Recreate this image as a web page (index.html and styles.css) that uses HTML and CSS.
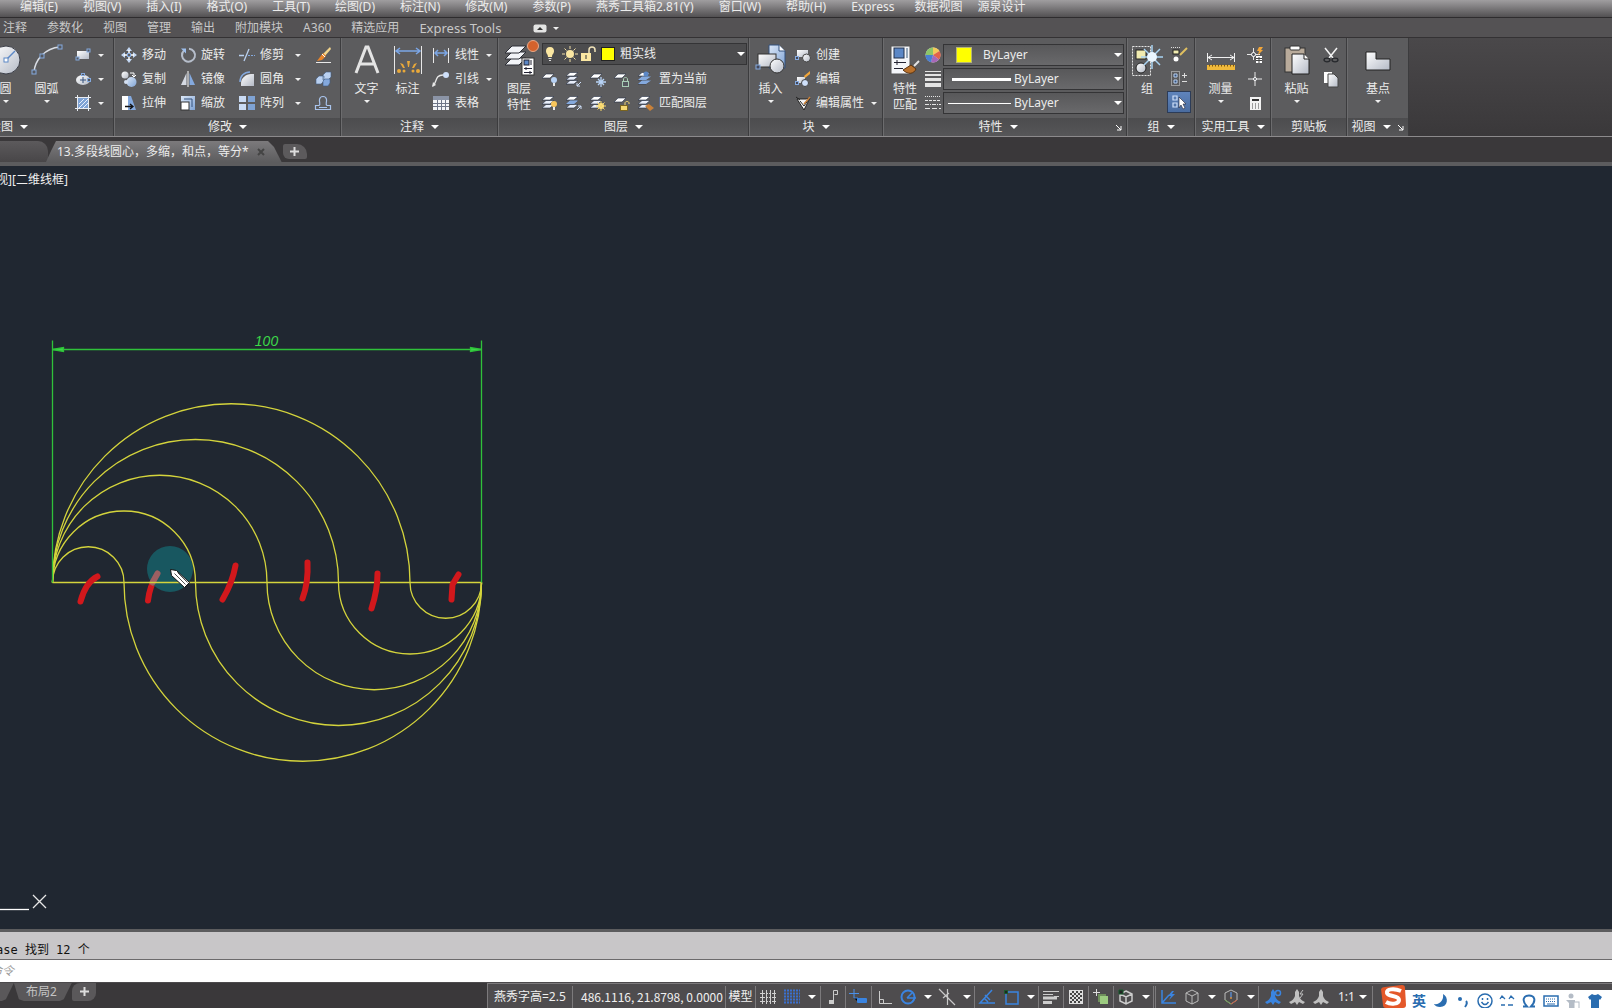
FILE: index.html
```
<!DOCTYPE html>
<html lang="zh-CN">
<head>
    <meta charset="UTF-8">
    <meta name="viewport" content="width=device-width, initial-scale=1.0">
    <title>CAD</title>
    <link rel="stylesheet" href="styles.css">
</head>
<body>
    <svg class="defs" width="0" height="0">
        <defs>
            <linearGradient id="silver" x1="0" y1="0" x2="1" y2="1">
                <stop offset="0" stop-color="#ffffff"/>
                <stop offset="1" stop-color="#b4bac6"/>
            </linearGradient>
            <linearGradient id="sky" x1="0" y1="0" x2="1" y2="1">
                <stop offset="0" stop-color="#dce8f8"/>
                <stop offset="1" stop-color="#7fa3d4"/>
            </linearGradient>
        </defs>
        <symbol id="layers" viewBox="0 0 16 16">
            <path d="M4 9.500h8L8 13H0z" fill="#e8eefa" stroke="#263044" stroke-width=".6"/>
            <path d="M4 5.500h8L8 9H0z" fill="#e8eefa" stroke="#263044" stroke-width=".6"/>
            <path d="M4 1.500h8L8 5H0z" fill="#fff" stroke="#263044" stroke-width=".6"/>
        </symbol>
        <symbol id="layer" viewBox="0 0 16 16">
            <path d="M4 3h8L8 7H0z" fill="#fff" stroke="#263044" stroke-width=".6"/>
        </symbol>
        <symbol id="person" viewBox="0 0 16 16">
            <path d="M8 0l2 3v4c1 3 3 5 6 6l-2 2-4-2-2 3-2-3-4 2-2-2c3-1 5-3 6-6V3z"/>
        </symbol>
    </svg>

    <nav class="menubar">
        <a href="#">编辑(E)</a>
        <a href="#">视图(V)</a>
        <a href="#">插入(I)</a>
        <a href="#">格式(O)</a>
        <a href="#">工具(T)</a>
        <a href="#">绘图(D)</a>
        <a href="#">标注(N)</a>
        <a href="#">修改(M)</a>
        <a href="#">参数(P)</a>
        <a href="#">燕秀工具箱2.81(Y)</a>
        <a href="#">窗口(W)</a>
        <a href="#">帮助(H)</a>
        <a href="#">Express</a>
        <a href="#" class="tight">数据视图</a>
        <a href="#" class="tighter">源泉设计</a>
    </nav>

    <nav class="ribbon-tabs">
        <a href="#">注释</a>
        <a href="#">参数化</a>
        <a href="#">视图</a>
        <a href="#">管理</a>
        <a href="#">输出</a>
        <a href="#">附加模块</a>
        <a href="#">A360</a>
        <a href="#">精选应用</a>
        <a href="#" class="latin">Express Tools</a>
        <button class="minimize" aria-label="最小化功能区">
            <svg width="14" height="9" viewBox="0 0 14 9"><rect x=".5" y=".5" width="13" height="8" rx="2" fill="#e4e4e4"/><path d="M4 6h6L7 3z" fill="#333"/></svg>
            <span class="caret"></span>
        </button>
    </nav>

    <main class="ribbon">
        <section class="panel panel-draw">
            <div class="panel-body">
                <button class="big">
                    <svg width="32" height="32" viewBox="0 0 32 32"><circle cx="16" cy="16" r="14" fill="url(#silver)" stroke="#3c3f48"/><path d="M16 16l9-9" stroke="#5b87c6" stroke-width="1.500"/><rect x="14" y="14" width="4" height="4" fill="#fff" stroke="#5b87c6"/></svg>
                    <span>圆</span><span class="caret"></span>
                </button>
                <button class="big">
                    <svg width="32" height="32" viewBox="0 0 32 32"><path d="M3 28C4 16 14 4 29 3" fill="none" stroke="#d9dde4" stroke-width="1.500"/><g fill="#55585f" stroke="#84a9de"><rect x="1" y="26" width="4" height="4"/><rect x="9" y="10" width="4" height="4"/><rect x="27" y="1" width="4" height="4"/></g></svg>
                    <span>圆弧</span><span class="caret"></span>
                </button>
                <div class="tools">
                    <button class="tool" aria-label="矩形"><svg width="16" height="16" viewBox="0 0 16 16"><rect x="2" y="4" width="12" height="8" fill="url(#silver)"/><g fill="#55585f" stroke="#84a9de"><rect x="1" y="10" width="3" height="3"/><rect x="12" y="2" width="3" height="3"/></g></svg><span class="caret"></span></button>
                    <button class="tool" aria-label="椭圆"><svg width="16" height="16" viewBox="0 0 16 16"><ellipse cx="8" cy="9" rx="7" ry="5" fill="url(#silver)"/><path d="M8 6v6M5 9h6" stroke="#33507c"/><g fill="#55585f" stroke="#84a9de"><rect x="6.500" y="2.500" width="3" height="2"/><rect x="12.500" y="7.500" width="3" height="3"/></g></svg><span class="caret"></span></button>
                    <button class="tool" aria-label="图案填充"><svg width="16" height="16" viewBox="0 0 16 16"><rect x="3" y="3" width="10" height="10" fill="#7fa3d4"/><path d="M4 9l5-5M4 13l9-9M8 13l5-5" stroke="#e8f0fc"/><path d="M0 2.500h16M0 13.500h16M2.500 0v16M13.500 0v16" stroke="#e8ecf2"/></svg><span class="caret"></span></button>
                </div>
            </div>
            <h2 class="panel-title">绘图<span class="caret-big"></span></h2>
        </section>

        <section class="panel panel-modify">
            <div class="panel-body">
                <div class="tools-grid">
                    <button class="tool"><svg width="16" height="16" viewBox="0 0 16 16"><path d="M8 0l3 4H5zM8 16l3-4H5zM0 8l4-3v6zM16 8l-4-3v6z" fill="#c4d8f4"/><path d="M8 3v3M8 10v3M3 8h3M10 8h3" stroke="#fff" stroke-width="1.500"/><rect x="6.500" y="6.500" width="3" height="3" fill="none" stroke="#84a9de"/></svg>移动</button>
                    <button class="tool"><svg width="16" height="16" viewBox="0 0 16 16"><path d="M4 3.500a6.500 6.500 0 1 0 5-1.800" fill="none" stroke="#b6becb" stroke-width="2"/><path d="M1 1.500h5v5z" fill="#9ec0ee"/></svg>旋转</button>
                    <button class="tool"><svg width="16" height="16" viewBox="0 0 16 16"><path d="M0 8.500h5M10 2L5 14" stroke="#b9d0f0" stroke-width="1.300"/><path d="M9 8.500h7" stroke="#84a9de" stroke-dasharray="2 1"/></svg>修剪<span class="caret"></span></button>
                    <button class="tool" aria-label="删除"><svg width="16" height="16" viewBox="0 0 16 16"><path d="M1 15.500h15" stroke="#e8e8e8"/><path d="M15 0L8 7l2 2 6-7z" fill="#f2d48c"/><path d="M8 6l3 3-4 4-5 1z" fill="#e8842a"/><path d="M7 7l3 3" stroke="#fff"/></svg></button>

                    <button class="tool"><svg width="16" height="16" viewBox="0 0 16 16"><circle cx="4" cy="4" r="3.500" fill="url(#silver)"/><circle cx="10.500" cy="11" r="5" fill="url(#sky)"/><circle cx="5" cy="11" r="2" fill="#d4e0f2"/><path d="M9 2h4v4M11 4l2 2 2-2" fill="none" stroke="#fff"/></svg>复制</button>
                    <button class="tool"><svg width="16" height="16" viewBox="0 0 16 16"><path d="M6.500 2v12H1z" fill="#d5dae3"/><path d="M9.500 2v12H15z" fill="#84a9de"/><path d="M8 0v16" stroke="#fff"/></svg>镜像</button>
                    <button class="tool"><svg width="16" height="16" viewBox="0 0 16 16"><path d="M2 15V12C2 7 7 3 12 3h3v12z" fill="url(#silver)"/><path d="M1 11C1 5 5 1 11 1" fill="none" stroke="#84a9de" stroke-width="1.500"/></svg>圆角<span class="caret"></span></button>
                    <button class="tool" aria-label="分解"><svg width="16" height="16" viewBox="0 0 16 16"><path d="M1 8l3-3h5v5l-3 3H1zM8 4l3-3h5v5l-3 3H8z" fill="#b9d0f0" stroke="#405a80" stroke-width=".6"/><path d="M8 10l2-2h5v4l-2 3H8z" fill="#84a9de" stroke="#405a80" stroke-width=".6"/></svg></button>

                    <button class="tool"><svg width="16" height="16" viewBox="0 0 16 16"><path d="M1 1h6v14H1z" fill="#fff"/><path d="M7 1h3l5 14H7z" fill="#84a9de"/><path d="M4 11.500h7M9 9l3 2.500L9 14" fill="none" stroke="#111" stroke-width="1.300"/></svg>拉伸</button>
                    <button class="tool"><svg width="16" height="16" viewBox="0 0 16 16"><rect x="1" y="1" width="14" height="14" fill="url(#sky)"/><rect x="1" y="7" width="8" height="8" fill="#fff" stroke="#333"/><path d="M4 4h8v8" fill="none" stroke="#33507c" /></svg>缩放</button>
                    <button class="tool"><svg width="16" height="16" viewBox="0 0 16 16"><path d="M0 1h7v6H0zM0 9h7v6H0z" fill="#c9dbf4"/><path d="M9 1h7v6H9zM9 9h7v6H9z" fill="#7fa3d4"/></svg>阵列<span class="caret"></span></button>
                    <button class="tool" aria-label="偏移"><svg width="16" height="16" viewBox="0 0 16 16"><path d="M0 14.500h15.500v-4H12c-2-1 0-3-.5-6-.5-4-6.500-4-7 0-.5 3 1.500 5-.5 6H.5v4M4 12.500h8" fill="none" stroke="#a9c4ec" stroke-width="1.200"/></svg></button>
                </div>
            </div>
            <h2 class="panel-title">修改<span class="caret-big"></span></h2>
        </section>

        <section class="panel panel-annotate">
            <div class="panel-body">
                <button class="big">
                    <svg width="32" height="32" viewBox="0 0 32 32"><path d="M5 29L15 3h2l10 26M9 20h14" fill="none" stroke="#e4e4e4" stroke-width="3"/></svg>
                    <span>文字</span><span class="caret"></span>
                </button>
                <button class="big">
                    <svg width="32" height="32" viewBox="0 0 32 32"><path d="M2.500 2v28M29.500 2v28" stroke="#e8e8e8"/><path d="M4 7h24M8 4L4 7l4 3M24 4l4 3-4 3" fill="none" stroke="#7ba6e6" stroke-width="1.500"/><g fill="#e8a83a"><path d="M15 17h3l-1 6h-1zM8 19l3 1 2 4-2 0zM25 19l-3 1-2 4 2 0z"/><circle cx="7" cy="27" r="2"/><circle cx="12" cy="27" r="1.500"/><circle cx="21" cy="27" r="1.500"/><circle cx="26" cy="27" r="2"/></g></svg>
                    <span>标注</span>
                </button>
                <div class="tools">
                    <button class="tool"><svg width="18" height="16" viewBox="0 0 18 16"><path d="M1.500 1v15M16.500 1v15" stroke="#e8e8e8"/><path d="M3 6h12M6 3L3 6l3 3M12 3l3 3-3 3" fill="none" stroke="#7ba6e6" stroke-width="1.500"/></svg>线性<span class="caret"></span></button>
                    <button class="tool"><svg width="18" height="16" viewBox="0 0 18 16"><path d="M1 15C5 11 3 4 11 4" fill="none" stroke="#e8e8e8" stroke-width="1.300"/><path d="M0 16l1-5 3 3z" fill="#e8e8e8"/><circle cx="14" cy="4" r="3" fill="#cfe0fa"/></svg>引线<span class="caret"></span></button>
                    <button class="tool"><svg width="18" height="16" viewBox="0 0 18 16"><rect x="1" y="1" width="16" height="14" fill="#f2f4f8"/><path d="M1 1h16v4H1z" fill="#8b94a6"/><path d="M1 8.500h16M1 11.500h16M5.500 5v10M9.500 5v10M13.500 5v10" stroke="#6d7588"/></svg>表格</button>
                </div>
            </div>
            <h2 class="panel-title">注释<span class="caret-big"></span></h2>
        </section>

        <section class="panel panel-layers">
            <div class="panel-body">
                <button class="big">
                    <svg width="32" height="32" viewBox="0 0 32 32"><g fill="#f2f4f8" stroke="#2c2f36"><path d="M9 14h14l-7 7H2z"/><path d="M9 8h14l-7 7H2z"/><path d="M9 2h14l-7 7H2z"/></g><rect x="19" y="14" width="12" height="17" fill="#fff" stroke="#333"/><rect x="21" y="16" width="5" height="5" fill="#5b87c6" stroke="#223"/><path d="M28 16v5M21 24.500h8M21 28.500h8M23 23v3M27 27v3" stroke="#223"/></svg>
                    <span>图层</span><span>特性</span>
                </button>
                <div class="layer-tools">
                    <div class="combo">
                        <svg width="64" height="20" viewBox="0 0 64 20"><path d="M7 3c-3 0-4 2-4 4 0 3 2 3 2 6h4c0-3 2-3 2-6 0-2-1-4-4-4z" fill="#fbe7a2"/><path d="M5.500 14.500h3M6 16.500h2" stroke="#ddd"/><circle cx="27" cy="10" r="4" fill="#fbe7a2"/><path d="M27 2v3M27 15v3M19 10h3M32 10h3M21.500 4.500l2 2M30.500 13.500l2 2M32.500 4.500l-2 2M23.500 13.500l-2 2" stroke="#f2dfa4"/><rect x="38" y="9" width="10" height="8" fill="#fbe7a2"/><path d="M46 9V6c0-4 6-4 6 0v2" fill="none" stroke="#f0e2b8" stroke-width="1.500"/><path d="M43 11v4" stroke="#333"/></svg>
                        <span class="swatch small"></span>
                        <select aria-label="图层"><option>粗实线</option></select>
                        <span class="caret-big"></span>
                    </div>
                    <div class="layer-row">
                        <button class="tool" aria-label="关"><svg width="16" height="16"><use href="#layer"/><circle cx="12" cy="9" r="3" fill="#b7d2f5"/><path d="M12 12v3" stroke="#e8e8e8" stroke-width="2"/></svg></button>
                        <button class="tool" aria-label="隔离"><svg width="16" height="16"><use href="#layers"/><path d="M15 11l-4 4M11 12v3h3" fill="none" stroke="#cfe0fa"/></svg></button>
                        <button class="tool" aria-label="冻结"><svg width="16" height="16"><use href="#layer"/><path d="M11 6v10M6 11h10M8 8l6 6M14 8l-6 6" stroke="#b7d2f5" stroke-width="1.300"/></svg></button>
                        <button class="tool" aria-label="锁定"><svg width="16" height="16"><use href="#layer"/><path d="M9.500 11V8c0-2 4-2 4 0v3" fill="none" stroke="#a9cdb5"/><rect x="8.500" y="10.500" width="6" height="5" fill="#55585f" stroke="#a9cdb5"/></svg></button>
                        <button class="tool"><svg width="16" height="16"><use href="#layers"/><path d="M4 5.500h9L8 9H0z" fill="#84a9de"/><path d="M4 9.500h9L8 13H0z" fill="#84a9de"/><circle cx="8" cy="3" r="2.500" fill="#5b87c6"/></svg>置为当前</button>
                    </div>
                    <div class="layer-row">
                        <button class="tool" aria-label="打开所有图层"><svg width="16" height="16"><use href="#layers"/><circle cx="12" cy="9" r="3" fill="#f8c65c"/><path d="M12 12v3" stroke="#e8e8e8" stroke-width="2"/></svg></button>
                        <button class="tool" aria-label="取消隔离"><svg width="16" height="16"><use href="#layers"/><path d="M4 5.500h8L8 9H0z" fill="#84a9de"/><path d="M11 15l4-4M12 11h3v3" fill="none" stroke="#cfe0fa"/></svg></button>
                        <button class="tool" aria-label="解冻所有图层"><svg width="16" height="16"><use href="#layers"/><circle cx="11" cy="11" r="3" fill="#ffe68a"/><path d="M11 6v10M6 11h10M7.500 7.500l7 7M14.500 7.500l-7 7" stroke="#f6d568"/></svg></button>
                        <button class="tool" aria-label="解锁"><svg width="16" height="16"><use href="#layer"/><path d="M11 11V8c0-2 4-2 4 0v1" fill="none" stroke="#f4d772"/><rect x="6.500" y="10.500" width="7" height="5" fill="#f4d772" stroke="#7a6420"/></svg></button>
                        <button class="tool"><svg width="16" height="16"><use href="#layers"/><path d="M7 11l4-2 5 4-4 3z" fill="#c8813a"/></svg>匹配图层</button>
                    </div>
                </div>
                <span class="badge"></span>
            </div>
            <h2 class="panel-title">图层<span class="caret-big"></span></h2>
        </section>

        <section class="panel panel-block">
            <div class="panel-body">
                <button class="big">
                    <svg width="32" height="32" viewBox="0 0 32 32"><path d="M14 1h10l6 6v17H14z" fill="url(#sky)" stroke="#33507c"/><path d="M24 1v6h6" fill="#fff" stroke="#33507c"/><rect x="3" y="10" width="18" height="13" fill="url(#silver)" stroke="#333"/><circle cx="22" cy="22" r="7" fill="url(#silver)" stroke="#333"/><rect x="1" y="21" width="4" height="4" fill="#44485a" stroke="#84a9de"/></svg>
                    <span>插入</span><span class="caret"></span>
                </button>
                <div class="tools">
                    <button class="tool"><svg width="16" height="16" viewBox="0 0 16 16"><rect x="2" y="3" width="11" height="7" fill="url(#silver)"/><circle cx="11.500" cy="11" r="4" fill="url(#silver)" stroke="#444"/><rect x=".5" y="9.500" width="3" height="3" fill="#44485a" stroke="#84a9de"/></svg>创建</button>
                    <button class="tool"><svg width="16" height="16" viewBox="0 0 16 16"><rect x="2" y="6" width="8" height="6" fill="url(#silver)"/><circle cx="10" cy="12" r="3.500" fill="#cfe0fa" stroke="#444"/><rect x=".5" y="10.500" width="3" height="3" fill="#44485a" stroke="#84a9de"/><path d="M15 0l-6 5 1 2 5-4z" fill="#f2a63a"/></svg>编辑</button>
                    <button class="tool"><svg width="16" height="16" viewBox="0 0 16 16"><path d="M2 4h9l4-1-6 12z" fill="#f4f4f4" stroke="#222"/><path d="M1 2l4 3M5 6l4 5 5-7" fill="none" stroke="#222"/><path d="M15 2l-6 7" stroke="#c8813a" stroke-width="1.500"/></svg>编辑属性<span class="caret"></span></button>
                </div>
            </div>
            <h2 class="panel-title">块<span class="caret-big"></span></h2>
        </section>

        <section class="panel panel-props">
            <div class="panel-body">
                <button class="big">
                    <svg width="32" height="32" viewBox="0 0 32 32"><rect x="2" y="2" width="19" height="28" fill="#f4f6fa" stroke="#555"/><rect x="5" y="4" width="10" height="10" fill="#5b87c6" stroke="#22304a"/><path d="M18 4v10" stroke="#9ab" stroke-width="2"/><path d="M5 18.500h12M8 16v5M5 24.500h9" stroke="#223"/><path d="M30 17l-5 5" stroke="#e4e4e4" stroke-width="2"/><path d="M14 26l8-5 5 4c-2 5-8 6-13 1z" fill="#b9712c" stroke="#5a3411"/></svg>
                    <span>特性</span><span>匹配</span>
                </button>
                <div class="prop-tools">
                    <div class="prop-row">
                        <svg width="16" height="16" viewBox="0 0 16 16"><circle cx="8" cy="8" r="7.500" fill="#ddd"/><path d="M8 8V.5A7.500 7.500 0 0 1 14.500 4z" fill="#f3c95a"/><path d="M8 8l6.500-4A7.500 7.500 0 0 1 14 12.500z" fill="#e2634a"/><path d="M8 8l6 4.500A7.500 7.500 0 0 1 6 15z" fill="#a868b8"/><path d="M8 8L6 15.200A7.500 7.500 0 0 1 .5 8z" fill="#4a7fd0"/><path d="M8 8H.5A7.500 7.500 0 0 1 8 .5z" fill="#8cc46a"/></svg>
                        <div class="combo">
                            <span class="swatch"></span>
                            <select aria-label="颜色"><option>ByLayer</option></select>
                            <span class="caret-big"></span>
                        </div>
                    </div>
                    <div class="prop-row">
                        <svg width="16" height="16" viewBox="0 0 16 16"><path d="M0 .5h16" stroke="#e4e4e4"/><path d="M0 4h16" stroke="#e4e4e4" stroke-width="2"/><path d="M0 8.500h16" stroke="#e4e4e4" stroke-width="3"/><path d="M0 14h16" stroke="#e4e4e4" stroke-width="4"/></svg>
                        <div class="combo">
                            <span class="line thick"></span>
                            <select aria-label="线宽"><option>ByLayer</option></select>
                            <span class="caret-big"></span>
                        </div>
                    </div>
                    <div class="prop-row">
                        <svg width="16" height="16" viewBox="0 0 16 16" stroke="#e4e4e4"><path d="M0 1.500h16" stroke-dasharray="1 1"/><path d="M0 5.500h16" stroke-dasharray="3 1"/><path d="M0 9.500h16" stroke-dasharray="4 1 1 1"/><path d="M0 13.500h16" stroke-dasharray="5 2"/></svg>
                        <div class="combo">
                            <span class="line"></span>
                            <select aria-label="线型"><option>ByLayer</option></select>
                            <span class="caret-big"></span>
                        </div>
                    </div>
                </div>
            </div>
            <h2 class="panel-title">特性<span class="caret-big"></span><svg class="launcher" width="6" height="6" viewBox="0 0 6 6"><path d="M0 0l5 5M5 1v4H1" fill="none" stroke="#fff"/></svg></h2>
        </section>

        <section class="panel panel-group">
            <div class="panel-body">
                <button class="big">
                    <svg width="32" height="32" viewBox="0 0 32 32"><rect x="1.500" y="2.500" width="18" height="29" fill="none" stroke="#e4e4e4" stroke-dasharray="2 1"/><rect x="5" y="6" width="10" height="9" fill="#f0ebb0" stroke="#222"/><circle cx="10" cy="24" r="5" fill="url(#silver)" stroke="#222"/><path d="M21 1v24M10 13h22M13 5l16 16M29 5L13 21" stroke="#a8d4f4" stroke-width="1.500"/><circle cx="21" cy="13" r="5" fill="#eaf6ff"/></svg>
                    <span>组</span>
                </button>
                <div class="tools">
                    <button class="tool" aria-label="解除编组"><svg width="16" height="16" viewBox="0 0 16 16"><path d="M0 .5h10" stroke="#ddd" stroke-dasharray="1 1"/><rect x="2" y="3" width="6" height="4" fill="#f0ebb0" stroke="#222"/><circle cx="5" cy="12" r="2.500" fill="#fff"/><path d="M16 1L9 8" stroke="#e0c060" stroke-width="2"/></svg></button>
                    <button class="tool" aria-label="组编辑"><svg width="16" height="16" viewBox="0 0 16 16"><rect x=".5" y=".5" width="8" height="14" fill="none" stroke="#ddd" stroke-dasharray="1 1"/><path d="M3 3h3v3H3zM3 9h3v3H3z" fill="#33507c" stroke="#b9d0f0"/><path d="M11 4.500h5M13.500 2v5M11 10.500h5" stroke="#ddd"/></svg></button>
                    <button class="tool on" aria-label="启用组选择"><svg width="16" height="16" viewBox="0 0 16 16"><path d="M2 2h4v4H2zM2 9h4v4H2z" fill="none" stroke="#cfe0fa" stroke-width="1.200"/><path d="M8 3v11l2-3 2 4 2-1-2-4h3z" fill="#fff" stroke="#223"  stroke-width=".6"/></svg></button>
                </div>
            </div>
            <h2 class="panel-title">组<span class="caret-big"></span></h2>
        </section>

        <section class="panel panel-utils">
            <div class="panel-body">
                <button class="big">
                    <svg width="32" height="32" viewBox="0 0 32 32"><path d="M2.500 9v9M29.500 9v9M3 13.500h26M7 11l-4 2.500L7 16M25 11l4 2.500-4 2.500" fill="none" stroke="#f0f0f0"/><rect x="2" y="21" width="28" height="5" fill="#f0b93a"/><path d="M4 21.500h26" stroke="#7a5510" stroke-dasharray="1 2" stroke-width="2"/></svg>
                    <span>测量</span><span class="caret"></span>
                </button>
                <div class="tools">
                    <button class="tool" aria-label="快速选择"><svg width="16" height="16" viewBox="0 0 16 16"><path d="M6.500 1v12M0 7.500h13" stroke="#e8e8e8"/><circle cx="6.500" cy="7.500" r="2" fill="#55585f" stroke="#fff"/><path d="M12 0h4l-2 3h2l-5 5 1-4h-2z" fill="#f2a63a"/><path d="M9 9h6v7H9z" fill="#fff"/><path d="M9 11.500h6M9 13.500h6M12 10v6" stroke="#444"/></svg></button>
                    <button class="tool" aria-label="点样式"><svg width="16" height="16" viewBox="0 0 16 16"><path d="M8 1v14M1 8h14" stroke="#e8e8e8"/><circle cx="8" cy="8" r="1.500" fill="#55585f" stroke="#fff"/></svg></button>
                    <button class="tool" aria-label="计算器"><svg width="16" height="16" viewBox="0 0 16 16"><rect x="3" y="2" width="11" height="13" fill="#f2f2f2"/><path d="M5 5h7" stroke="#333" stroke-width="2"/><path d="M5 9h7M5 11h7M5 13h7" stroke="#444" stroke-dasharray="1 2"/></svg></button>
                </div>
            </div>
            <h2 class="panel-title">实用工具<span class="caret-big"></span></h2>
        </section>

        <section class="panel panel-clip">
            <div class="panel-body">
                <button class="big">
                    <svg width="32" height="32" viewBox="0 0 32 32"><rect x="4" y="4" width="20" height="24" fill="#b9ab9b" stroke="#333"/><rect x="9" y="2" width="10" height="4" rx="1" fill="#fff" stroke="#333"/><path d="M11 10h12l5 5v15H11z" fill="url(#silver)" stroke="#222"/><path d="M23 10v5h5" fill="#fff" stroke="#222"/></svg>
                    <span>粘贴</span><span class="caret"></span>
                </button>
                <div class="tools">
                    <button class="tool" aria-label="剪切"><svg width="16" height="16" viewBox="0 0 16 16"><path d="M2 1l8 10M14 1L6 11" stroke="#f4f4f4" stroke-width="1.500"/><g fill="none" stroke="#26282c" stroke-width="1.300"><ellipse cx="4" cy="13" rx="3" ry="1.800"/><ellipse cx="12" cy="13" rx="3" ry="1.800"/></g></svg></button>
                    <button class="tool" aria-label="复制"><svg width="16" height="16" viewBox="0 0 16 16"><path d="M1 1h8v11H1z" fill="#fff"/><path d="M5 3h6l4 4v9H5z" fill="url(#silver)" stroke="#444"/></svg></button>
                </div>
            </div>
            <h2 class="panel-title">剪贴板</h2>
        </section>

        <section class="panel panel-view">
            <div class="panel-body">
                <button class="big">
                    <svg width="32" height="32" viewBox="0 0 32 32"><path d="M4 8h10v7h14v11H4z" fill="url(#silver)" stroke="#222"/></svg>
                    <span>基点</span><span class="caret"></span>
                </button>
            </div>
            <h2 class="panel-title">视图<span class="caret-big"></span><svg class="launcher" width="6" height="6" viewBox="0 0 6 6"><path d="M0 0l5 5M5 1v4H1" fill="none" stroke="#fff"/></svg></h2>
        </section>
    </main>

    <div class="file-tabs">
        <button class="file-tab previous" aria-label="开始"></button>
        <button class="file-tab active">13.多段线圆心，多缩，和点，等分*
            <svg width="8" height="8" viewBox="0 0 8 8"><path d="M1 1l6 6M7 1L1 7" stroke="#444" stroke-width="2"/></svg>
        </button>
        <button class="file-tab add" aria-label="新图形"><svg width="9" height="9" viewBox="0 0 9 9"><path d="M4.500 0v9M0 4.500h9" stroke="#ddd" stroke-width="2"/></svg></button>
    </div>

    <div class="canvas">
        <span class="view-label">视][二维线框]</span>
        <svg class="drawing" width="100%" height="100%">
            <!-- origin is the left end of the 100 unit base line -->
            <g transform="translate(52.500 416.500)" fill="none">
                <path d="M105-9Q97 4 95.500 18" stroke="#d2181c" stroke-width="6" stroke-linecap="round"/>
                <circle cx="117.500" cy="-13.500" r="23" fill="#186068" fill-opacity=".85"/>
                <path d="M105-9l-5 9" stroke="#9c5f62" stroke-width="6" stroke-linecap="round"/>
                <g stroke="#d4d43c" stroke-width="1.300">
                    <path d="M0 0h429"/>
                    <path d="M0 0a35.750 35.750 0 0 1 71.500 0a178.750 178.750 0 0 0 357.500 0"/>
                    <path d="M0 0a71.500 71.500 0 0 1 143 0a143 143 0 0 0 286 0"/>
                    <path d="M0 0a107.250 107.250 0 0 1 214.500 0a107.250 107.250 0 0 0 214.500 0"/>
                    <path d="M0 0a143 143 0 0 1 286 0a71.500 71.500 0 0 0 143 0"/>
                    <path d="M0 0a178.750 178.750 0 0 1 357.500 0a35.750 35.750 0 0 0 71.500 0"/>
                </g>
                <g stroke="#2fc23a" stroke-width="1.300">
                    <path d="M0 0v-242M429 0v-242M0-233h429"/>
                    <path d="M0-233l11-2v4zM429-233l-11-2v4z" fill="#3cd848"/>
                </g>
                <text class="dim-text" x="214" y="-237" text-anchor="middle">100</text>
                <g stroke="#d2181c" stroke-width="6" stroke-linecap="round" stroke-linejoin="round">
                    <path d="M45-6Q33 0 28 19"/>
                    <path d="M183-17Q180 0 170 17"/>
                    <path d="M255-20Q256 0 250 16"/>
                    <path d="M325-9Q325 8 319 26"/>
                    <path d="M406-8l-6 10-1 15"/>
                </g>
                <path d="M118-13l6 1 13 12-5 5-13-12z" fill="#fff" stroke="#111"/>
                <path d="M122-9l11 11M125-10l10 10" stroke="#222" stroke-width=".8"/>
            </g>
        </svg>
        <svg class="ucs" width="48" height="16" viewBox="0 0 48 16"><path d="M0 15.500h29" stroke="#fff" stroke-width="1.300"/><path d="M33 1l13 13M46 1L33 14" stroke="#e8e8e8" stroke-width="1.300"/></svg>
    </div>

    <div class="command">
        <div class="history">ase 找到 12 个</div>
        <input type="text" aria-label="命令行" placeholder="命令">
    </div>

    <footer class="bottom">
        <div class="layout-tabs">
            <button class="layout-tab first">布局1</button>
            <button class="layout-tab">布局2</button>
            <button class="layout-tab add" aria-label="新建布局"><svg width="9" height="9" viewBox="0 0 9 9"><path d="M4.500 0v9M0 4.500h9" stroke="#ddd" stroke-width="2"/></svg></button>
        </div>
        <div class="status">
            <div class="cell text-height">燕秀字高=2.5</div>
            <div class="cell coords">486.1116, 21.8798, 0.0000</div>
            <div class="cell"><button class="model">模型</button></div>
            <div class="cell wide">
                <button class="slot" aria-label="栅格"><svg width="16" height="16" viewBox="0 0 16 16" stroke="#d0d0d0"><path d="M2.500 1v14M6.500 1v14M10.500 1v14M14.500 1v14"/><path d="M0 4.500h16M0 8.500h16M0 12.500h16" stroke-dasharray="2 1"/></svg></button>
                <button class="slot" aria-label="捕捉"><svg width="16" height="16" viewBox="0 0 16 16" stroke="#3a70d0"><path d="M0 1.500h16M0 4.500h16M0 7.500h16M0 10.500h16M0 13.500h16" stroke-width="2" stroke-dasharray="2 1"/></svg></button>
                <button class="drop" aria-label="捕捉设置"><span class="caret-big"></span></button>
            </div>
            <div class="cell"><button class="slot" aria-label="推断约束"><svg width="16" height="16" viewBox="0 0 16 16"><path d="M8.500 13V1.500h4v4h-3" fill="none" stroke="#ccc"/><rect x="4" y="11" width="5" height="4" fill="#ccc"/></svg></button></div>
            <div class="cell wide"><button class="slot" aria-label="动态输入"><svg width="18" height="16" viewBox="0 0 18 16"><path d="M5 0v9M0 4.500h10" stroke="#4a90e8"/><path d="M5 9h4v4" stroke="#3a84e0"/><rect x="8" y="9" width="10" height="5" rx="1" fill="#3a84e0"/></svg></button></div>
            <div class="cell">
                <button class="slot" aria-label="正交"><svg width="16" height="16" viewBox="0 0 16 16"><path d="M3.500 2v12.500H16M3.500 10.500h4v4" fill="none" stroke="#ccc"/></svg></button>
                <button class="slot" aria-label="极轴"><svg width="16" height="16" viewBox="0 0 16 16"><circle cx="8" cy="8" r="6.500" fill="none" stroke="#3a84e0" stroke-width="2"/><path d="M7 9h9M7 9l5-5" stroke="#3a84e0" stroke-width="1.500"/></svg></button>
                <button class="drop" aria-label="极轴设置"><span class="caret-big"></span></button>
                <button class="slot" aria-label="等轴测"><svg width="16" height="16" viewBox="0 0 16 16"><path d="M0 0l16 16M8.500 0v16M4 9l6-5" stroke="#c8c8c8" stroke-width="1.200"/></svg></button>
                <button class="drop" aria-label="等轴测设置"><span class="caret-big"></span></button>
            </div>
            <div class="cell">
                <button class="slot" aria-label="对象追踪"><svg width="16" height="16" viewBox="0 0 16 16"><path d="M13 1L1 14h15M6 6l5 5M5 9l4 4" fill="none" stroke="#3a84e0" stroke-width="1.500"/></svg></button>
                <button class="slot" aria-label="对象捕捉"><svg width="16" height="16" viewBox="0 0 16 16"><path d="M3 3h12v12H3z" fill="none" stroke="#3a84e0" stroke-width="1.500"/><path d="M1.500 1.500h3v3h-3z" fill="#222" stroke="#165c2c"/></svg></button>
                <button class="drop" aria-label="对象捕捉设置"><span class="caret-big"></span></button>
            </div>
            <div class="cell"><button class="slot" aria-label="线宽"><svg width="16" height="16" viewBox="0 0 16 16" stroke="#ccc"><path d="M0 2.500h16M0 5.500h10M11 7.500h5"/><path d="M0 9h14" stroke-width="3"/><path d="M0 13.500h9" stroke-width="3"/></svg></button></div>
            <div class="cell"><button class="slot" aria-label="透明度"><svg width="16" height="16" viewBox="0 0 16 16"><rect x="1.500" y="1.500" width="13" height="13" fill="#444" stroke="#ddd"/><g stroke="#ddd" stroke-width="2" stroke-dasharray="2 2"><path d="M2 3h12M2 7h12M2 11h12"/><path d="M4 5h10M4 9h10M4 13h10"/></g></svg></button></div>
            <div class="cell"><button class="slot" aria-label="选择循环"><svg width="16" height="16" viewBox="0 0 16 16"><path d="M3.500 0v7M0 3.500h7" stroke="#ddd"/><path d="M5 5h8v8H5z" fill="#6f8f5c"/><path d="M7 7h8v8H7z" fill="#9ccb80"/></svg></button></div>
            <div class="cell double">
                <button class="slot" aria-label="三维对象捕捉"><svg width="16" height="16" viewBox="0 0 16 16"><path d="M8 2l6 3v7l-6 3-6-3V5zM2 5l6 3 6-3M8 8v7" fill="none" stroke="#ccc" stroke-width="1.500"/><path d="M1 1h4v4H1z" fill="#222" stroke="#165c2c"/></svg></button>
                <button class="drop" aria-label="三维对象捕捉设置"><span class="caret-big"></span></button>
            </div>
            <div class="cell">
                <button class="slot" aria-label="动态UCS"><svg width="16" height="16" viewBox="0 0 16 16"><path d="M2 1v13h14M2 14L9 6" fill="none" stroke="#3a84e0" stroke-width="1.500"/><path d="M12 2L8 7h3l-2 4 6-6h-3l2-3z" fill="#3a84e0"/></svg></button>
                <button class="slot" aria-label="子对象过滤"><svg width="16" height="16" viewBox="0 0 16 16"><path d="M8 1l6 3v8l-6 3-6-3V4zM2 4l6 3 6-3M8 7v8" fill="none" stroke="#bbb"/></svg></button>
                <button class="drop" aria-label="过滤设置"><span class="caret-big"></span></button>
                <button class="slot" aria-label="小控件"><svg width="16" height="16" viewBox="0 0 16 16"><path d="M8 1l6 3v7l-6 4-6-4V4z" fill="none" stroke="#bbb"/><path d="M8 3v6" stroke="#5b87c6" stroke-width="1.500"/><path d="M2 11l6 4" stroke="#6a9a4c"/><path d="M8 15l6-4" stroke="#c05a3a"/><circle cx="8" cy="9" r="1" fill="#d08a3a"/></svg></button>
                <button class="drop" aria-label="小控件设置"><span class="caret-big"></span></button>
            </div>
            <div class="cell people">
                <button class="slot" aria-label="注释可见性"><svg width="16" height="16" fill="#3a84e0"><use href="#person"/><circle cx="13" cy="4" r="2.500" fill="none" stroke="#3a84e0" stroke-width="1.500"/></svg></button>
                <button class="slot" aria-label="自动缩放"><svg width="16" height="16" fill="#c0c0c0"><use href="#person"/><path d="M14 1l-3 4h3l-3 4" fill="none" stroke="#c0c0c0"/></svg></button>
                <button class="slot" aria-label="注释"><svg width="16" height="16" fill="#c0c0c0"><use href="#person"/></svg></button>
                <button class="scale">1:1<span class="caret-big"></span></button>
            </div>
        </div>
    </footer>

    <aside class="ime">
        <svg class="ime-logo" width="26" height="23" viewBox="0 0 26 23"><path d="M1 4q1-2 4-2L22 0q3 0 3 3l1 17q0 3-3 3H6q-3 0-3-3z" fill="#e4582a"/><path d="M21 6C14 3 6 4 7 8c1 4 12 2 12 7 0 4-8 5-13 2" fill="none" stroke="#fff" stroke-width="4"/></svg>
        <div class="ime-bar">
            <button>英</button>
            <button aria-label="半角"><svg width="14" height="14" viewBox="0 0 14 14"><path d="M9 0c6 3 5 13-3 13-3 0-5-1-6-3 6 1 10-4 9-10z" fill="#2a6db0"/></svg></button>
            <button aria-label="标点"><svg width="12" height="14" viewBox="0 0 12 14"><circle cx="3" cy="5" r="2" fill="#2a6db0"/><path d="M9 7q2 2-1 6" fill="none" stroke="#2a6db0" stroke-width="2"/></svg></button>
            <button aria-label="表情"><svg width="16" height="16" viewBox="0 0 16 16"><circle cx="8" cy="8" r="7" fill="none" stroke="#2a6db0" stroke-width="1.500"/><path d="M4.500 9q3.500 5 7 0M5.500 5v2M10.500 5v2" fill="none" stroke="#2a6db0" stroke-width="1.500"/></svg></button>
            <button aria-label="颜文字"><svg width="16" height="14" viewBox="0 0 16 14"><path d="M1 5l2-3 3 3M10 5l2-3 3 3M2 11h4M9 11h5" fill="none" stroke="#2a6db0" stroke-width="1.300"/></svg></button>
            <button aria-label="符号"><svg width="14" height="14" viewBox="0 0 14 14"><path d="M1 12.500h4C-1 6 2 1.500 7 1.500S15 6 9 12.500h4" fill="none" stroke="#2a6db0" stroke-width="2"/></svg></button>
            <button aria-label="软键盘"><svg width="16" height="14" viewBox="0 0 16 14"><rect x="1" y="2" width="14" height="10" fill="none" stroke="#2a6db0" stroke-width="1.500"/><path d="M3 5h10M3 7.500h10" stroke="#2a6db0" stroke-dasharray="1 1"/><path d="M4 10h8" stroke="#2a6db0"/></svg></button>
            <button aria-label="账户"><svg width="16" height="16" viewBox="0 0 16 16"><circle cx="6" cy="3" r="2.500" fill="#b4bcc6"/><path d="M1 7h9v8H4V10z" fill="#b4bcc6"/><rect x="9" y="9" width="5" height="7" fill="#fff" stroke="#b4bcc6"/></svg></button>
            <button aria-label="皮肤"><svg width="14" height="14" viewBox="0 0 14 14"><path d="M4 0q3 2 6 0l4 3-2 3-1-1v9H3V5L2 6 0 3z" fill="#2a6db0"/></svg></button>
        </div>
    </aside>
</body>
</html>
```
FILE: styles.css
```
* {
    box-sizing: border-box;
}
body {
    margin: 0;
    height: 100vh;
    overflow: hidden;
    display: flex;
    flex-direction: column;
    font-family: "Noto Sans", "Noto Sans CJK SC", sans-serif;
    font-size: 12px;
    line-height: 16px;
    color: #ececec;
    background: #3a383a;
}
a {
    color: inherit;
    text-decoration: none;
}
button {
    margin: 0;
    padding: 0;
    border: none;
    background: none;
    color: inherit;
    font: inherit;
    white-space: nowrap;
}
svg {
    flex: none;
    overflow: visible;
}
.defs {
    position: absolute;
}

/* menus */
.menubar {
    display: flex;
    gap: 25px;
    height: 18px;
    padding-left: 20px;
    line-height: 14px;
    white-space: nowrap;
    background: linear-gradient(#a09ea0, #525052);
    border-bottom: 1px solid #2e2c2e;
}
.menubar .tight {
    margin-left: -5px;
}
.menubar .tighter {
    margin-left: -10px;
}
.ribbon-tabs {
    display: flex;
    align-items: center;
    gap: 20px;
    height: 20px;
    padding: 1px 0 0 3px;
    color: #c8c8c8;
    white-space: nowrap;
    background: #545254;
    border-bottom: 1px solid #343234;
}
.latin {
    font-size: 13px;
}
.minimize {
    display: flex;
    align-items: center;
    gap: 6px;
    margin-left: 12px;
}

/* arrows */
.caret {
    flex: none;
    border: 3px solid transparent;
    border-top-color: #f0f0f0;
    border-bottom: none;
}
.caret-big {
    flex: none;
    border: 4px solid transparent;
    border-top-color: #fff;
    border-bottom: none;
}

/* ribbon */
.ribbon {
    display: flex;
    height: 99px;
    background: linear-gradient(#4a484a, #3a383a);
    border-bottom: 1px solid #8c8a8c;
}
.panel {
    flex: none;
    display: flex;
    flex-direction: column;
    background: #5c5c5e;
    border-left: 1px solid #6c6c6e;
    border-right: 1px solid #3c3c3e;
}
.panel-draw {
    width: 211px;
    margin-left: -97px;
}
.panel-modify {
    width: 227px;
}
.panel-annotate {
    width: 157px;
}
.panel-layers {
    width: 251px;
}
.panel-block {
    width: 134px;
}
.panel-props {
    width: 244px;
}
.panel-group {
    width: 68px;
}
.panel-utils {
    width: 76px;
}
.panel-clip {
    width: 76px;
}
.panel-view {
    width: 62px;
}
.panel-body {
    position: relative;
    flex: 1;
    display: flex;
    padding: 5px 0 0 4px;
}
.panel-draw .panel-body {
    justify-content: flex-end;
    padding-right: 9px;
}
.panel-block .panel-body {
    padding-left: 0;
}
.panel-title {
    position: relative;
    display: flex;
    align-items: center;
    justify-content: center;
    gap: 7px;
    height: 18px;
    margin: 0;
    font-size: 12px;
    font-weight: normal;
    background: linear-gradient(#4c4c4e, #565658);
}
.launcher {
    position: absolute;
    right: 4px;
    bottom: 5px;
}
.panel-props .panel-title,
.panel-view .panel-title {
    padding-right: 14px;
}
.big {
    display: flex;
    flex-direction: column;
    align-items: center;
    flex: none;
    width: 41px;
    padding-top: 1px;
}
.big svg {
    margin-bottom: 5px;
}
.big .caret {
    margin-top: 3px;
}
.panel-view .big {
    width: 52px;
}
.tools {
    padding-left: 4px;
}
.panel-draw .tools {
    padding-left: 8px;
}
.tool {
    display: flex;
    align-items: center;
    gap: 5px;
    height: 24px;
}
.tool .caret {
    margin-left: 2px;
}
.tools-grid {
    display: grid;
    grid-template-columns: 59px 59px 76px 20px;
    align-content: start;
    padding-left: 2px;
}
.tools-grid .caret {
    margin-left: 6px;
}
.panel-group .big {
    width: 32px;
}
.panel-group .panel-body {
    padding-left: 3px;
}
.panel-group .tool,
.panel-utils .tool,
.panel-clip .tool {
    justify-content: center;
    width: 24px;
}
.panel-group .on {
    height: 22px;
    background: linear-gradient(#5f84bc, #4a6c9f);
    border: 1px solid #2c3c58;
}
.panel-utils .tools,
.panel-clip .tools {
    padding-left: 2px;
}

/* combo boxes */
.combo {
    display: flex;
    align-items: center;
    flex: 1;
    height: 22px;
    padding: 0 1px 0 4px;
    background: linear-gradient(#58585a, #69696b);
    border: 1px solid #343436;
}
.combo select {
    flex: 1;
    min-width: 0;
    padding: 0;
    border: none;
    appearance: none;
    background: none;
    color: inherit;
    font: inherit;
}
.combo svg {
    margin-left: -4px;
}
.panel-layers .big {
    width: 32px;
}
.layer-tools {
    flex: 1;
    margin-left: 4px;
}
.layer-tools .combo {
    background: #4c4c4e;
    margin: 0 1px 2px 3px;
}
.layer-row {
    display: flex;
    gap: 8px;
    padding-left: 3px;
}
.swatch {
    width: 16px;
    height: 16px;
    margin: 0 11px 0 8px;
    background: #ffff00;
    border: 1px solid #b4b478;
}
.swatch.small {
    width: 14px;
    height: 14px;
    margin: 0 5px 0 -6px;
    border-color: #222;
}
.line {
    width: 63px;
    height: 1px;
    margin-right: 3px;
    background: #fff;
}
.line.thick {
    width: 59px;
    height: 3px;
    margin-left: 4px;
}
.badge {
    position: absolute;
    left: 28px;
    top: 2px;
    width: 12px;
    height: 12px;
    border-radius: 50%;
    background: #d4622c;
    border: 1px solid #e8a888;
}
.prop-tools {
    flex: 1;
    min-width: 0;
    padding-right: 2px;
}
.panel-props .big {
    width: 34px;
}
.prop-row {
    display: flex;
    align-items: center;
    gap: 2px;
    height: 24px;
    padding-left: 3px;
}

/* drawing tabs */
.file-tabs {
    display: flex;
    align-items: flex-end;
    height: 29px;
    padding-top: 4px;
    background: #3a383a;
    border-bottom: 4px solid #5c5c5e;
}
.file-tab {
    display: flex;
    align-items: center;
    height: 21px;
}
.file-tab.previous {
    width: 48px;
    background: linear-gradient(#5c5a5c, #484648);
    border-radius: 0 10px 0 0;
}
.file-tab.active {
    gap: 8px;
    padding: 0 17px 0 11px;
    margin-left: -2px;
    background: linear-gradient(#7c7a7c, #5c5c5e);
    clip-path: polygon(0 100%, 5px 10px, 10px 0, 222px 0, 228px 6px, 100% 100%);
}
.file-tab.add {
    justify-content: center;
    width: 24px;
    height: 15px;
    margin: 0 0 3px 1px;
    background: #5c5a5c;
    border-radius: 2px 10px 2px 6px;
}

/* drawing area */
.canvas {
    position: relative;
    flex: 1;
    min-height: 0;
    overflow: hidden;
    background: #202731;
}
.drawing {
    display: block;
}
.view-label {
    position: absolute;
    left: -4px;
    top: 6px;
    color: #f0f0f0;
}
.ucs {
    position: absolute;
    left: 0;
    bottom: 19px;
}
.dim-text {
    font-family: "Liberation Sans", sans-serif;
    font-size: 14px;
    font-style: italic;
    fill: #3cd848;
}

/* command line */
.command {
    border-top: 3px solid #5c5c5e;
    background: #fff;
}
.history {
    height: 28px;
    padding-top: 10px;
    margin-left: -4px;
    font-family: "DejaVu Sans Mono", "Noto Sans CJK SC", monospace;
    color: #111;
    background: #c8c6c8;
    border-bottom: 1px solid #6c6a6c;
    white-space: pre;
}
.command input {
    display: block;
    width: 100%;
    height: 22px;
    margin-left: -10px;
    padding: 0 0 2px;
    border: none;
    background: #fff;
    font: inherit;
}
.command input::placeholder {
    color: #999;
    font-style: italic;
}

/* bottom bar */
.bottom {
    display: grid;
    grid-template-columns: 487px 1fr;
    height: 26px;
    border-top: 1px solid #4c4a4c;
}
.layout-tabs {
    display: flex;
    color: #c4c4c4;
}
.layout-tab {
    height: 18px;
    padding: 0 15px 0 12px;
    background: #5a585a;
    clip-path: polygon(0 0, 100% 0, calc(100% - 8px) 90%, calc(100% - 12px) 100%, 10px 100%, 5px 90%);
}
.layout-tab.first {
    padding: 0 14px 0 0;
    margin-left: -31px;
}
.layout-tab.add {
    width: 24px;
    padding: 0 0 0 2px;
    border-radius: 8px 0 8px 2px;
    clip-path: none;
}
.status {
    display: flex;
    overflow: hidden;
    padding-top: 2px;
    background: #4e4c4e;
    border: 1px solid #7c7a7c;
    border-bottom: none;
    border-right: none;
    color: #f0f0f0;
    white-space: nowrap;
}
.cell {
    display: flex;
    align-items: center;
    flex: none;
    border-right: 1px solid #7c7a7c;
}
.cell.wide {
    padding-right: 1px;
}
.cell.double {
    border-right: 3px double #7c7a7c;
}
.cell.people {
    padding-left: 2px;
}
.text-height {
    width: 85px;
    padding-left: 6px;
}
.coords {
    width: 153px;
    padding-left: 8px;
    font-family: "Noto Sans CJK SC", sans-serif;
}
.model {
    width: 29px;
}
.slot {
    display: flex;
    align-items: center;
    justify-content: center;
    width: 24px;
}
.drop {
    display: flex;
    justify-content: center;
    width: 15px;
}
.scale {
    display: flex;
    align-items: center;
    gap: 4px;
    padding: 0 5px;
}

/* input method bar */
.ime {
    position: absolute;
    right: 0;
    bottom: 0;
    display: flex;
    align-items: flex-end;
}
.ime-logo {
    z-index: 1;
}
.ime-bar {
    display: flex;
    align-items: center;
    height: 18px;
    margin-left: -6px;
    padding: 4px 6px 0 8px;
    background: #fff;
    overflow: hidden;
}
.ime-bar button {
    display: flex;
    justify-content: center;
    width: 22px;
    color: #2a6db0;
    font-size: 14px;
    font-weight: bold;
}
```
